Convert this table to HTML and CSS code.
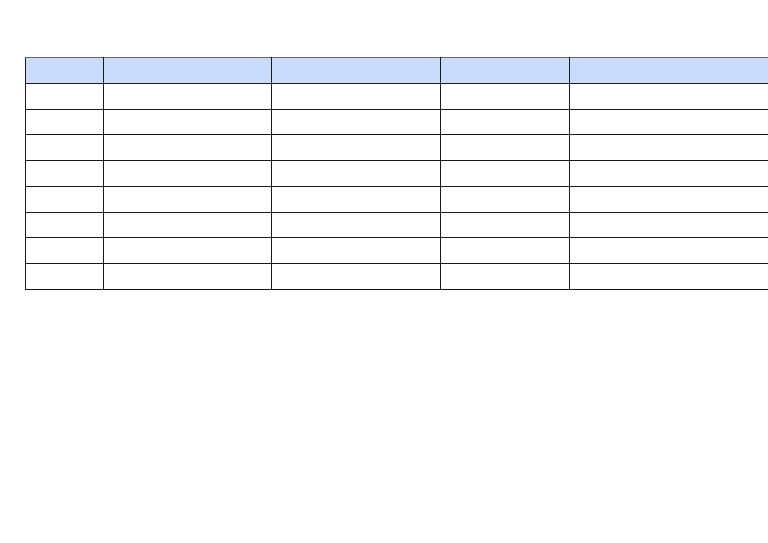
FILE: index.html
```html
<!DOCTYPE html>
<html>
<head>
<meta charset="utf-8">
<link rel="stylesheet" href="styles.css">
</head>
<body>
<div class="page">
<table class="grid">
<colgroup>
<col class="c1"><col class="c2"><col class="c3"><col class="c4"><col class="c5">
</colgroup>
<thead>
<tr><th></th><th></th><th></th><th></th><th></th></tr>
</thead>
<tbody>
<tr><td></td><td></td><td></td><td></td><td></td></tr>
<tr><td></td><td></td><td></td><td></td><td></td></tr>
<tr><td></td><td></td><td></td><td></td><td></td></tr>
<tr><td></td><td></td><td></td><td></td><td></td></tr>
<tr><td></td><td></td><td></td><td></td><td></td></tr>
<tr><td></td><td></td><td></td><td></td><td></td></tr>
<tr><td></td><td></td><td></td><td></td><td></td></tr>
<tr><td></td><td></td><td></td><td></td><td></td></tr>
</tbody>
</table>
</div>
</body>
</html>
```
FILE: styles.css
```css
html, body {
  margin: 0;
  padding: 0;
  background: #ffffff;
  font-family: "Liberation Sans", Arial, sans-serif;
}
.page {
  width: 768px;
  height: 543px;
  overflow: hidden;
  padding: 57px 0 0 25px;
  box-sizing: border-box;
}
.grid {
  border-collapse: collapse;
  table-layout: fixed;
  width: 800px;
}
.c1 { width: 78px; }
.c2 { width: 168px; }
.c3 { width: 169px; }
.c4 { width: 129px; }
.c5 { width: 256px; }
.grid th, .grid td {
  border: 1px solid #1a1a1a;
  padding: 0;
  height: 24.78px;
}
.grid thead th {
  background: #c9dcfb;
  border-top-color: #666666;
}
```
